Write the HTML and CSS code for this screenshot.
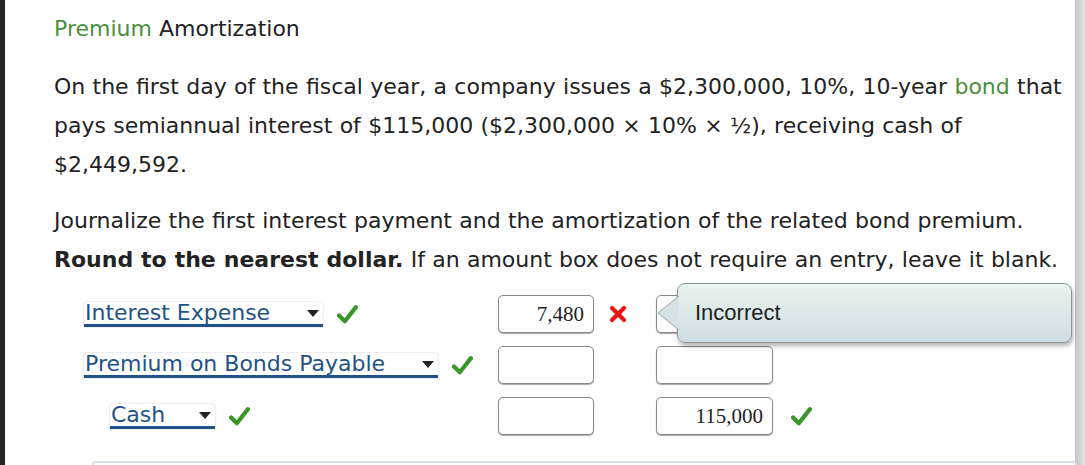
FILE: index.html
```html
<!DOCTYPE html>
<html>
<head>
<meta charset="utf-8">
<link rel="stylesheet" href="styles.css">
</head>
<body>
<div class="page">
  <div class="leftbar"></div>
  <div class="main">
    <h1 class="title"><span class="green">Premium</span> Amortization</h1>
    <p class="para">On the first day of the fiscal year, a company issues a $2,300,000, 10%, 10-year <span class="green">bond</span> that pays semiannual interest of $115,000 ($2,300,000 × 10% × ½), receiving cash of $2,449,592.</p>
    <p class="para para2">Journalize the first interest payment and the amortization of the related bond premium. <b>Round to the nearest dollar.</b> If an amount box does not require an entry, leave it blank.</p>

    <div class="journal">
      <div class="row">
        <div class="acct indent1">
          <div class="select w1"><span>Interest Expense</span><span class="tri"></span></div>
          <svg class="check" viewBox="0 0 20 20"><path d="M2 11 L7.5 16.5 L18 3" fill="none" stroke="#3a962a" stroke-width="4" stroke-linecap="round" stroke-linejoin="round"/></svg>
        </div>
        <div class="amt">7,480</div>
        <div class="mark"><svg class="xmark" viewBox="0 0 20 20"><path d="M4 4 L16 16 M16 4 L4 16" stroke="#ee1111" stroke-width="4.2" stroke-linecap="round"/></svg></div>
        <div class="amt wide"></div>
        <div class="mark"></div>
      </div>
      <div class="row">
        <div class="acct indent1">
          <div class="select w2"><span>Premium on Bonds Payable</span><span class="tri"></span></div>
          <svg class="check" viewBox="0 0 20 20"><path d="M2 11 L7.5 16.5 L18 3" fill="none" stroke="#3a962a" stroke-width="4" stroke-linecap="round" stroke-linejoin="round"/></svg>
        </div>
        <div class="amt"></div>
        <div class="mark"></div>
        <div class="amt wide"></div>
        <div class="mark"></div>
      </div>
      <div class="row">
        <div class="acct indent2">
          <div class="select w3"><span>Cash</span><span class="tri"></span></div>
          <svg class="check" viewBox="0 0 20 20"><path d="M2 11 L7.5 16.5 L18 3" fill="none" stroke="#3a962a" stroke-width="4" stroke-linecap="round" stroke-linejoin="round"/></svg>
        </div>
        <div class="amt"></div>
        <div class="mark"></div>
        <div class="amt wide">115,000</div>
        <div class="mark"><svg class="check" viewBox="0 0 20 20"><path d="M2 11 L7.5 16.5 L18 3" fill="none" stroke="#3a962a" stroke-width="4" stroke-linecap="round" stroke-linejoin="round"/></svg></div>
      </div>

      <div class="tooltip">
        <svg class="arrow" viewBox="0 0 22 36"><path d="M22 1 L1 18 L22 35" fill="#d5e3e6" stroke="#9aa3a7" stroke-width="1"/></svg>
        <span>Incorrect</span>
      </div>
    </div>
    <div class="nextbox"></div>
  </div>
  <div class="rightbar"></div>
</div>
</body>
</html>
```

FILE: styles.css
```css
html, body {
  margin: 0;
  padding: 0;
  background: #fff;
}
.page {
  display: flex;
  width: 1085px;
  height: 465px;
  overflow: hidden;
  font-family: "DejaVu Sans", Verdana, sans-serif;
  color: #222;
}
.leftbar {
  width: 5px;
  background: #232323;
  flex: none;
}
.rightbar {
  width: 10px;
  flex: none;
  background: linear-gradient(to right, #c4c4c4, #e4e4e4);
}
.main {
  flex: 1;
  padding-left: 49px;
  padding-right: 6px;
  position: relative;
}
.title {
  margin: 0;
  padding-top: 15px;
  font-size: 22px;
  font-weight: normal;
  line-height: 28px;
}
.green {
  color: #4b8f3c;
}
.para {
  margin: 0;
  margin-top: 24px;
  font-size: 22px;
  line-height: 39px;
  word-spacing: 0.3px;
}
.para2 {
  margin-top: 17px;
}
.para b {
  font-weight: bold;
}
.journal {
  position: relative;
  margin-top: 16px;
}
.row {
  display: flex;
  align-items: center;
  height: 38px;
  margin-bottom: 13px;
}
.acct {
  width: 444px;
  display: flex;
  align-items: center;
  flex: none;
}
.indent1 { padding-left: 30px; box-sizing: border-box; }
.indent2 { padding-left: 56px; box-sizing: border-box; }
.select {
  box-sizing: border-box;
  height: 25px;
  display: flex;
  align-items: center;
  justify-content: space-between;
  padding: 0 4px 0 1px;
  background: #fff;
  border-radius: 4px 4px 0 0;
  border-bottom: 3px solid #1f5286;
  box-shadow: 0 0 2px rgba(0,0,0,0.25);
  color: #1f5286;
  font-size: 22px;
  line-height: 22px;
}
.w1 { width: 239px; }
.w2 { width: 354px; }
.w3 { width: 105px; }
.tri {
  width: 0;
  height: 0;
  border-left: 6px solid transparent;
  border-right: 6px solid transparent;
  border-top: 7px solid #222;
  margin-top: 2px;
}
.check {
  width: 21px;
  height: 21px;
  margin-left: 14px;
}
.amt {
  box-sizing: border-box;
  width: 96px;
  height: 38px;
  flex: none;
  border: 1px solid #8a8a8a;
  border-radius: 5px;
  box-shadow: 0 1px 1px rgba(0,0,0,0.35);
  font-family: "Liberation Serif", "Times New Roman", serif;
  font-size: 21px;
  line-height: 36px;
  text-align: right;
  padding-right: 9px;
  background: #fff;
}
.amt.wide {
  width: 117px;
}
.mark {
  width: 62px;
  flex: none;
  display: flex;
  align-items: center;
  padding-left: 14px;
  box-sizing: border-box;
}
.mark .check {
  margin-left: 4px;
}
.xmark {
  width: 20px;
  height: 20px;
}
.tooltip {
  position: absolute;
  left: 623px;
  top: -12px;
  width: 395px;
  height: 60px;
  box-sizing: border-box;
  border: 1px solid #8d9599;
  border-radius: 8px;
  background: linear-gradient(to bottom, #e8f4ed, #cfdee5);
  box-shadow: 1px 3px 4px rgba(0,0,0,0.3);
  display: flex;
  align-items: center;
  padding-left: 17px;
  font-family: "Liberation Sans", Arial, sans-serif;
  font-size: 22px;
  color: #222;
}
.arrow {
  position: absolute;
  left: -21px;
  top: 11px;
  width: 22px;
  height: 36px;
}
.nextbox {
  position: absolute;
  left: 87px;
  right: -2px;
  top: 461px;
  height: 20px;
  border: 2px solid #d3e2e5;
  border-radius: 4px;
  background: #fff;
}
```
